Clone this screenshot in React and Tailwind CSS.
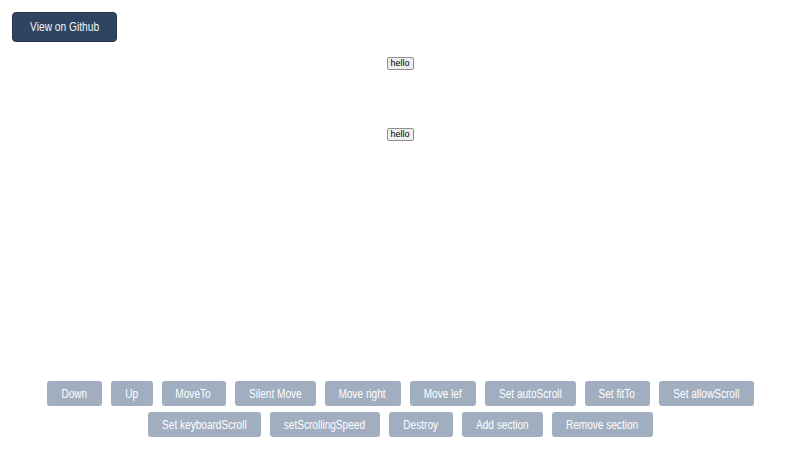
import React from "react";

const row1 = [
  ["Down", "w-[55px]"],
  ["Up", "w-[42px]"],
  ["MoveTo", "w-[64px]"],
  ["Silent Move", "w-[81px]"],
  ["Move right", "w-[76px]"],
  ["Move lef", "w-[66px]"],
  ["Set autoScroll", "w-[91px]"],
  ["Set fitTo", "w-[65px]"],
  ["Set allowScroll", "w-[95px]"],
];
const row2 = [
  ["Set keyboardScroll", "w-[113px]"],
  ["setScrollingSpeed", "w-[110px]"],
  ["Destroy", "w-[64px]"],
  ["Add section", "w-[81px]"],
  ["Remove section", "w-[101px]"],
];

function Btn({ label, w }) {
  return (
    <button className={`${w} h-[25px] rounded-[3px] bg-[#a0aec0] text-white text-[12px] leading-none flex items-center justify-center`}>
      <span className="inline-block whitespace-nowrap scale-x-[0.84]">{label}</span>
    </button>
  );
}

function Hello() {
  return (
    <button className="w-[27px] h-[13px] border border-[#8f8f8f] rounded-[2px] bg-[#efefef] text-black text-[9px] leading-none flex items-center justify-center">
      hello
    </button>
  );
}

export default function App() {
  return (
    <div
      className="h-[450px] w-[800px] bg-white flex flex-col overflow-hidden"
      style={{ fontFamily: '"Liberation Sans", Arial, sans-serif' }}
    >
      <div className="pt-[12px] pl-[12px]">
        <button className="w-[105px] h-[30px] rounded-[4px] bg-[#2f4461] border border-[#24344a] text-[#f1f5f9] text-[12px] leading-none flex items-center justify-center">
          <span className="inline-block whitespace-nowrap scale-x-[0.85]">View on Github</span>
        </button>
      </div>
      <div className="flex flex-col items-center pt-[15px] gap-[58px]">
        <Hello />
        <Hello />
      </div>
      <div className="flex-1" />
      <div className="flex flex-col items-center gap-[6px] pb-[13px]">
        <div className="flex gap-[9px] justify-center">
          {row1.map(([l, w]) => (
            <Btn key={l} label={l} w={w} />
          ))}
        </div>
        <div className="flex gap-[9px] justify-center">
          {row2.map(([l, w]) => (
            <Btn key={l} label={l} w={w} />
          ))}
        </div>
      </div>
    </div>
  );
}
